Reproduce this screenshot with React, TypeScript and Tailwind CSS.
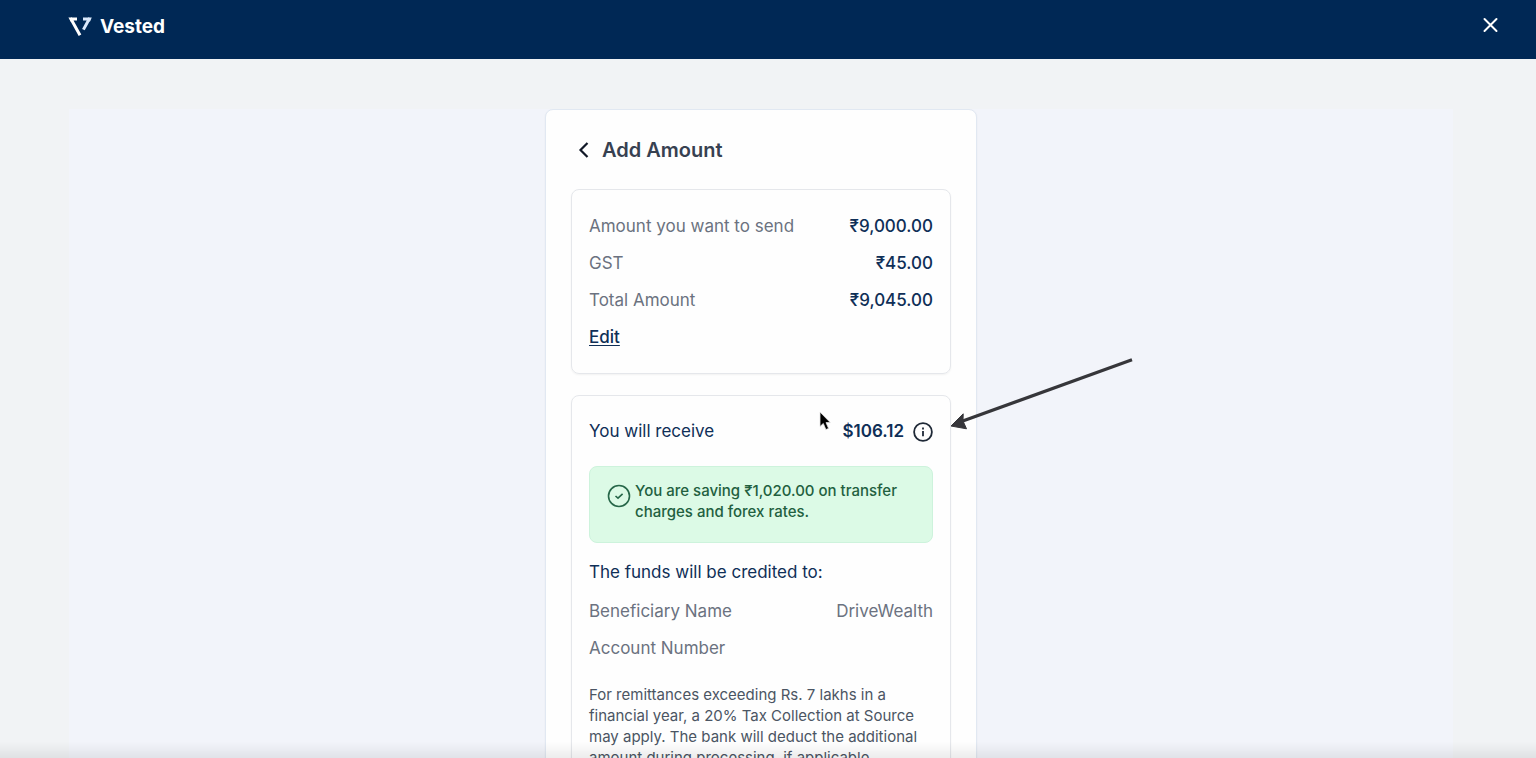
import React from 'react';

const STYLES = {
  box: 'rounded-lg border border-[#e5e7eb] shadow-xs px-[17px]',
  label: 'text-[17px] leading-[25px] text-[#6b7280]',
  amount: 'text-[17px] leading-[25px] text-[#0f2f57]',
};

const AMOUNTS = [
  { label: 'Amount you want to send', value: '₹9,000.00' },
  { label: 'GST', value: '₹45.00' },
  { label: 'Total Amount', value: '₹9,045.00' },
];

const Logo: React.FC = () => (
  <svg width="24" height="20" viewBox="0 0 24 20" fill="none" strokeWidth="3">
    <path d="M9 2H3L12 18.2" stroke="#fff" strokeLinejoin="bevel" />
    <path d="M0.4 0.5H4L5 5H3Z" fill="#fff" />
    <path d="M15 2H21.2L15.4 12.6" stroke="#dbe9fb" strokeLinejoin="bevel" />
    <path d="M20 0.5H23.8L22 4.4H20Z" fill="#dbe9fb" />
  </svg>
);

const InfoIcon: React.FC = () => (
  <svg width="20" height="20" viewBox="0 0 20 20" fill="none" stroke="#1f2937" strokeWidth="1.8">
    <circle cx="10" cy="10" r="8.9" />
    <path d="M10 9V14.2" />
    <path d="M10 5.6V7.4" />
  </svg>
);

const CheckIcon: React.FC = () => (
  <svg width="24" height="24" viewBox="0 0 24 24" fill="none" stroke="#276749" strokeWidth="1.6">
    <circle cx="12" cy="12" r="10.5" />
    <path d="M8.5 12L11 14.2L15.6 9.8" />
  </svg>
);

const Pointer: React.FC = () => (
  <svg className="absolute left-[247px] top-4" width="14" height="22" viewBox="0 0 14 22">
    <path d="M1 0V14.5L4.3 11.5L6.9 17.6L9.6 16.4L7 10.6H11.3Z" fill="#000" stroke="#e5e5e5" strokeWidth="0.8" />
  </svg>
);

const Arrow: React.FC = () => (
  <svg className="absolute left-full -top-10" width="184" height="80" viewBox="0 0 184 80">
    <path d="M182 3.8L10 66" stroke="#36363a" strokeWidth="3.2" />
    <path d="M1 70L13.2 57.8L13 65L16.5 72.8Z" fill="#36363a" stroke="#36363a" strokeWidth="1" strokeLinejoin="round" />
  </svg>
);

const App: React.FC = () => {
  return (
    <div className="h-screen overflow-hidden flex flex-col bg-[#f1f3f5] font-['Inter',sans-serif]">
      <header className="h-[59px] shrink-0 bg-[#002855] pl-[68px] pr-9 pt-[15px] flex items-start justify-between">
        <div className="flex items-center gap-2 text-white">
          <Logo />
          <span className="text-[19px] leading-6 font-bold">Vested</span>
        </div>
        <button type="button" aria-label="Close" className="w-5 h-5 flex items-center justify-center">
          <svg width="16" height="16" viewBox="0 0 16 16" stroke="#fff" strokeWidth="2" strokeLinecap="round">
            <path d="M2.5 2L14.5 14M14.5 2L2.5 14" />
          </svg>
        </button>
      </header>

      <main className="flex-1 min-h-0 pt-[50px] pl-[69px] pr-[83px]">
        <div className="min-h-full bg-[#f2f4fa] flex justify-center">
          <section className="w-full max-w-[432px] rounded-lg border border-[#e1e8f2] shadow-xs bg-[#fefefe] px-[25px] pt-[26px] pb-8">
            <div className="flex items-center gap-3 pl-[6px] mb-[25px]">
              <button type="button" aria-label="Back" className="w-[13px] h-7 flex items-center justify-center">
                <svg width="11" height="16" viewBox="0 0 11 16" fill="none" stroke="#111827" strokeWidth="2.2">
                  <path d="M9.5 1L2.5 8L9.5 15" />
                </svg>
              </button>
              <h1 className="text-xl leading-7 font-semibold text-[#374151]">Add Amount</h1>
            </div>

            <div className={`${STYLES.box} pt-6 pb-[23px] mb-[21px]`}>
              <dl>
                {AMOUNTS.map(row => (
                  <div key={row.label} className="flex justify-between mb-3">
                    <dt className={STYLES.label}>{row.label}</dt>
                    <dd className={`${STYLES.amount} font-medium`}>{row.value}</dd>
                  </div>
                ))}
              </dl>
              <a href="#edit" className="block w-fit text-[17px] leading-[25px] font-medium text-[#0f2f57] underline underline-offset-2">
                Edit
              </a>
            </div>

            <div className={`${STYLES.box} relative pt-[23px] pb-6`}>
              <div className="flex items-center justify-between text-[#0f2f57] mb-[22px]">
                <span className="text-[17px] leading-[25px]">You will receive</span>
                <div className="flex items-center gap-[9px]">
                  <span className={`${STYLES.amount} font-semibold`}>$106.12</span>
                  <button type="button" aria-label="Rate details">
                    <InfoIcon />
                  </button>
                </div>
              </div>

              <div className="rounded-lg border border-[#cdf3dc] bg-[#dcfae6] flex gap-1 pl-[17px] pr-4 pt-[13px] pb-5 mb-[17px]">
                <div className="pt-1 shrink-0">
                  <CheckIcon />
                </div>
                <p className="text-[15px] leading-[21px] font-medium text-[#22603f]">
                  You are saving ₹1,020.00 on transfer charges and forex rates.
                </p>
              </div>

              <h2 className="text-[17px] leading-[25px] text-[#0f2f57] mb-[14px]">The funds will be credited to:</h2>
              <dl className="mb-[23px]">
                <div className="flex justify-between mb-3">
                  <dt className={STYLES.label}>Beneficiary Name</dt>
                  <dd className={STYLES.label}>DriveWealth</dd>
                </div>
                <div className="flex justify-between">
                  <dt className={STYLES.label}>Account Number</dt>
                  <dd className={STYLES.label}></dd>
                </div>
              </dl>
              <p className="text-[15px] leading-[21px] text-[#4b5563]">
                For remittances exceeding Rs. 7 lakhs in a financial year, a 20% Tax Collection at Source may apply.
                The bank will deduct the additional amount during processing, if applicable.
              </p>

              <Pointer />
              <Arrow />
            </div>
          </section>
        </div>
      </main>

      <div className="fixed inset-x-0 bottom-0 h-4 bg-linear-to-b from-transparent to-black/7 pointer-events-none" />
    </div>
  );
};

export default App;
